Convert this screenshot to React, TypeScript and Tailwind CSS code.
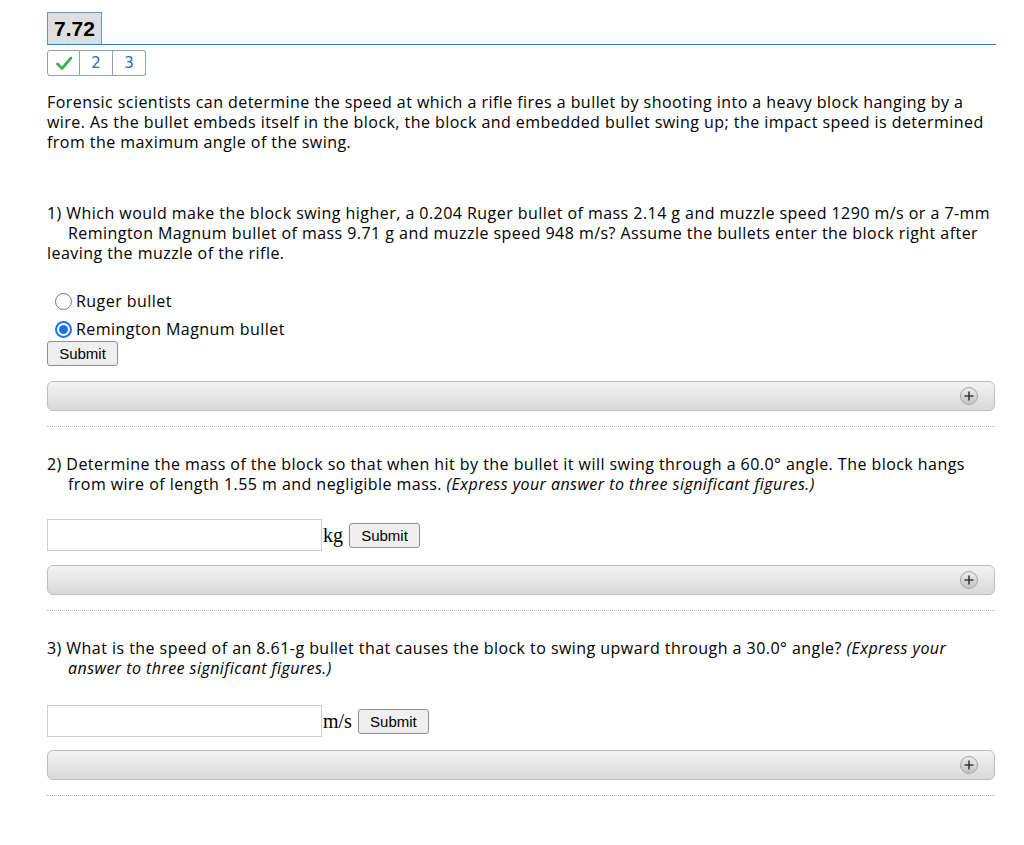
import React from "react";

const F = { fontFamily: '"Open Sans", "DejaVu Sans", sans-serif', letterSpacing: "0.45px" };

function Bar({ top }: { top: string }) {
  return (
    <div className={`${top} h-[30px] w-[948px] rounded-[6px] border border-[#bdbdbd] bg-gradient-to-b from-[#f3f3f3] to-[#d9d9d9] flex items-center justify-end pr-[15px]`}>
      <svg width="20" height="20" viewBox="0 0 20 20">
        <defs>
          <linearGradient id="pg" x1="0" y1="0" x2="0" y2="1">
            <stop offset="0" stopColor="#ececec" />
            <stop offset="1" stopColor="#c2c2c2" />
          </linearGradient>
        </defs>
        <circle cx="10" cy="10" r="8.5" fill="url(#pg)" stroke="#a5a5a5" strokeWidth="1" />
        <path d="M10 5.5v9M5.5 10h9" stroke="#3a3a3a" strokeWidth="1.6" />
      </svg>
    </div>
  );
}

function Dotted() {
  return <div className="mt-[15px] w-[948px] border-t border-dotted border-[#b5b5b5]" />;
}

function SubmitBtn() {
  return (
    <button
      className="h-[25px] w-[71px] rounded-[3px] border border-[#8f8f8f] bg-[#efefef] text-[15px] text-black leading-none"
      style={{ fontFamily: '"Liberation Sans", Arial, sans-serif', letterSpacing: 0 }}
    >
      Submit
    </button>
  );
}

export default function App() {
  return (
    <div className="min-h-[845px] bg-white text-black pl-[47px] pt-[12px]" style={F}>
      {/* header */}
      <div className="flex items-end w-[949px] border-b border-[#3a74b4]">
        <div
          className="h-[32px] w-[55px] bg-[#dedede] border border-b-0 border-[#6f93bd] flex items-center justify-center text-[21px] font-bold"
          style={{ fontFamily: '"Liberation Sans", Arial, sans-serif', letterSpacing: 0 }}
        >
          7.72
        </div>
      </div>
      <div className="flex mt-[5px]" style={{ fontFamily: '"DejaVu Sans", sans-serif', letterSpacing: 0 }}>
        <div className="h-[26px] w-[33px] border border-[#8aa3c2] rounded-l-[3px] flex items-center justify-center">
          <svg width="18" height="16" viewBox="0 0 18 16">
            <path d="M2.5 9 L7 13.5 L16 3" fill="none" stroke="#3fb24f" strokeWidth="2.8" strokeLinecap="round" strokeLinejoin="round" />
          </svg>
        </div>
        <div className="h-[26px] w-[33px] border border-l-0 border-[#8aa3c2] flex items-center justify-center text-[15px] text-[#1f6fc0]">2</div>
        <div className="h-[26px] w-[33px] border border-l-0 border-[#8aa3c2] rounded-r-[3px] flex items-center justify-center text-[15px] text-[#1f6fc0]">3</div>
      </div>

      <div className="text-[16px] leading-[20px] mt-[16px] whitespace-nowrap">
        <div>Forensic scientists can determine the speed at which a rifle fires a bullet by shooting into a heavy block hanging by a</div>
        <div>wire. As the bullet embeds itself in the block, the block and embedded bullet swing up; the impact speed is determined</div>
        <div>from the maximum angle of the swing.</div>
      </div>

      {/* Q1 */}
      <div className="text-[16px] leading-[20px] mt-[51px] whitespace-nowrap">
        <div>1) Which would make the block swing higher, a 0.204 Ruger bullet of mass 2.14 g and muzzle speed 1290 m/s or a 7-mm</div>
        <div className="pl-[21px]">Remington Magnum bullet of mass 9.71 g and muzzle speed 948 m/s? Assume the bullets enter the block right after</div>
        <div>leaving the muzzle of the rifle.</div>
      </div>
      <div className="mt-[24px] text-[16px] leading-[20px]">
        <label className="flex items-center h-[28px]">
          <span className="ml-[8px] w-[17px] h-[17px] rounded-full border border-[#767676] bg-white" />
          <span className="ml-[4px]">Ruger bullet</span>
        </label>
        <label className="flex items-center h-[28px]">
          <span className="ml-[8px] w-[17px] h-[17px] rounded-full border-[2px] border-[#1a73e8] bg-white flex items-center justify-center">
            <span className="w-[9px] h-[9px] rounded-full bg-[#1a73e8]" />
          </span>
          <span className="ml-[4px]">Remington Magnum bullet</span>
        </label>
      </div>
      <div className="-mt-[2px] leading-none">
        <SubmitBtn />
      </div>
      <Bar top="mt-[15px]" />
      <Dotted />

      {/* Q2 */}
      <div className="text-[16px] leading-[20px] mt-[27px] whitespace-nowrap">
        <div>2) Determine the mass of the block so that when hit by the bullet it will swing through a 60.0° angle. The block hangs</div>
        <div className="pl-[21px]">from wire of length 1.55 m and negligible mass. <i>(Express your answer to three significant figures.)</i></div>
      </div>
      <div className="flex items-center mt-[25px]">
        <div className="h-[32px] w-[275px] border border-[#cfcfcf] bg-white" />
        <span className="text-[20px] ml-[1px] mr-[6px]" style={{ fontFamily: '"Liberation Serif", "Times New Roman", serif', letterSpacing: 0 }}>kg</span>
        <SubmitBtn />
      </div>
      <Bar top="mt-[14px]" />
      <Dotted />

      {/* Q3 */}
      <div className="text-[16px] leading-[20px] mt-[27px] whitespace-nowrap">
        <div>3) What is the speed of an 8.61-g bullet that causes the block to swing upward through a 30.0° angle? <i>(Express your</i></div>
        <div className="pl-[21px]"><i>answer to three significant figures.)</i></div>
      </div>
      <div className="flex items-center mt-[27px]">
        <div className="h-[32px] w-[275px] border border-[#cfcfcf] bg-white" />
        <span className="text-[20px] ml-[1px] mr-[6px]" style={{ fontFamily: '"Liberation Serif", "Times New Roman", serif', letterSpacing: 0 }}>m/s</span>
        <SubmitBtn />
      </div>
      <Bar top="mt-[13px]" />
      <Dotted />
    </div>
  );
}
